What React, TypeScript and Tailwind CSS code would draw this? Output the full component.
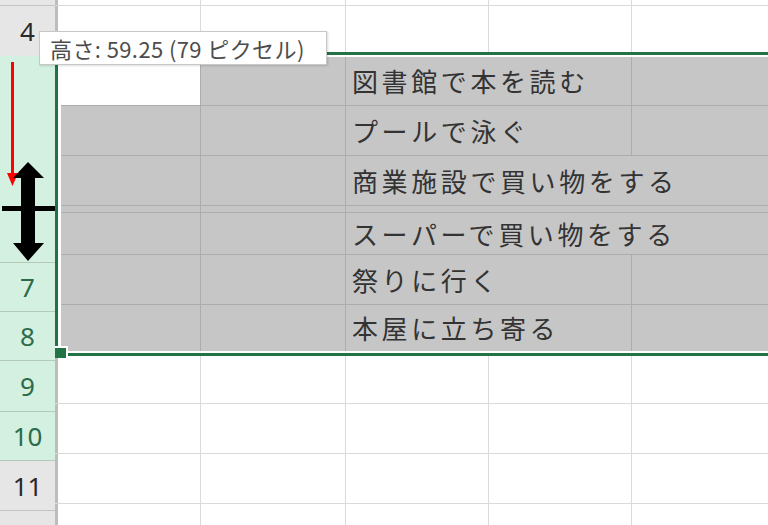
const jp = "font-['Noto_Sans_CJK_JP','Noto_Sans',sans-serif]";

type HeadProps = { h: string; label?: string; sel?: boolean; line?: boolean };

function Head({ h, label, sel, line = true }: HeadProps) {
  return (
    <div
      className={`${h} flex shrink-0 items-center justify-center leading-none text-[26px] font-['Noto_Sans',sans-serif] ${
        sel ? "bg-[#d3f0e0] text-[#2b6b4b]" : "bg-[#e6e6e6] text-[#2a2a2a]"
      } ${line ? (sel ? "border-b border-[#b5c8bc]" : "border-b border-[#c3c3c3]") : ""}`}
    >
      {label}
    </div>
  );
}

function PlainRow({ h, line = true }: { h: string; line?: boolean }) {
  return (
    <div className={`${h} flex shrink-0 ${line ? "border-b border-[#dadada]" : ""}`}>
      <div className="w-[3px] bg-[#bdbdbd]" />
      <div className="flex-1 border-r border-[#dadada]" />
      <div className="w-[145px] border-r border-[#dadada]" />
      <div className="w-[143px] border-r border-[#dadada]" />
      <div className="w-[143px] border-r border-[#dadada]" />
      <div className="w-[136px]" />
    </div>
  );
}

type SelProps = { h: string; text: string; long?: boolean; active?: boolean; line?: boolean };

function SelRow({ h, text, long, active, line = true }: SelProps) {
  return (
    <div className={`${h} flex shrink-0 ${line ? "border-b border-[#acacac]" : ""}`}>
      <div className={`flex-1 border-r border-[#acacac] ${active ? "bg-white" : "bg-[#c6c6c6]"}`} />
      <div className="w-[145px] border-r border-[#acacac] bg-[#c6c6c6]" />
      <div
        className={`flex items-center overflow-hidden whitespace-nowrap bg-[#c6c6c6] pl-[6px] text-[26px] leading-none tracking-[3.6px] text-[#333] ${jp} ${
          long ? "w-[422px]" : "w-[286px] border-r border-[#acacac]"
        }`}
      >
        {text}
      </div>
      {!long && <div className="w-[136px] bg-[#c6c6c6]" />}
    </div>
  );
}

export default function App() {
  return (
    <div className="relative flex h-[525px] w-[768px] overflow-hidden bg-white">
      {/* row headers */}
      <div className="flex w-[55px] shrink-0 flex-col">
        <Head h="h-[6px]" />
        <Head h="h-[50px]" label="4" line={false} />
        <Head h="h-[207px]" sel />
        <Head h="h-[49px]" label="7" sel />
        <Head h="h-[49px]" label="8" sel />
        <Head h="h-[51px]" label="9" sel />
        <Head h="h-[49px]" label="10" sel />
        <Head h="h-[50px]" label="11" />
        <Head h="h-[50px]" label="12" />
      </div>

      {/* cells */}
      <div className="flex flex-1 flex-col">
        <PlainRow h="h-[6px]" />
        <PlainRow h="h-[46px]" line={false} />

        <div className="flex shrink-0 flex-col border-y-[3px] border-l-[3px] border-[#217346] bg-white py-[2px] pl-[3px]">
          <SelRow h="h-[49px]" text="図書館で本を読む" active />
          <SelRow h="h-[50px]" text="プールで泳ぐ" />
          <SelRow h="h-[50px]" text="商業施設で買い物をする" long />
          <div className="flex h-[7px] shrink-0 border-b border-[#acacac] bg-[#c6c6c6]">
            <div className="flex-1 border-r border-[#acacac]" />
            <div className="w-[145px] border-r border-[#acacac]" />
            <div className="w-[422px]" />
          </div>
          <SelRow h="h-[42px]" text="スーパーで買い物をする" long />
          <SelRow h="h-[50px]" text="祭りに行く" />
          <SelRow h="h-[46px]" text="本屋に立ち寄る" line={false} />
        </div>

        <PlainRow h="h-[48px]" />
        <PlainRow h="h-[50px]" />
        <PlainRow h="h-[50px]" />
        <PlainRow h="h-[50px]" />
      </div>

      {/* fill handle */}
      <div className="absolute left-[55px] top-[346px] h-[12px] w-[13px] border-r-2 border-t-2 border-white bg-[#217346]" />

      {/* tooltip */}
      <div
        className={`absolute left-[39px] top-[31px] flex h-[34px] w-[288px] items-center border border-[#c8c8c8] bg-white pl-[10px] text-[22px] leading-none tracking-[0.4px] text-[#4d4d4d] shadow-[1px_1px_2px_rgba(0,0,0,0.15)] ${jp}`}
      >
        高さ: 59.25 (79 ピクセル)
      </div>

      {/* red arrow */}
      <svg className="absolute left-0 top-0" width="24" height="190" viewBox="0 0 24 190">
        <rect x="11" y="62" width="3" height="112" fill="#ff0000" />
        <polygon points="7,173 18,173 12.5,186" fill="#ff0000" />
      </svg>

      {/* resize cursor */}
      <svg className="absolute left-0 top-[158px]" width="58" height="108" viewBox="0 158 58 108">
        <polygon
          points="28,162 44,178 35,178 35,243 44,243 28,261 13,243 21,243 21,178 13,178"
          fill="#000"
        />
        <rect x="2" y="206" width="53" height="5" fill="#000" />
      </svg>
    </div>
  );
}
